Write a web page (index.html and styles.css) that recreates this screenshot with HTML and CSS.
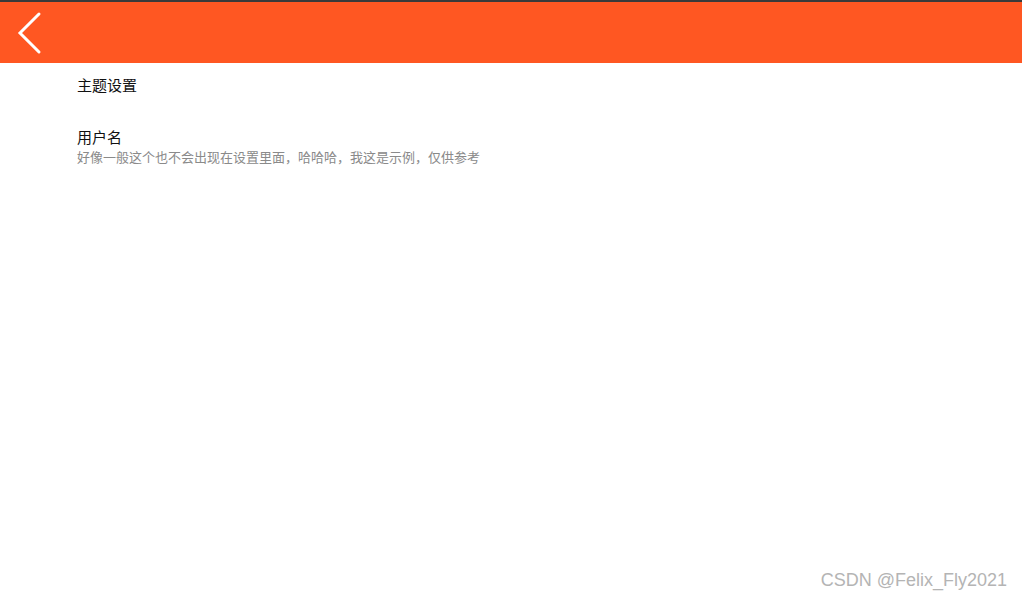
FILE: index.html
```html
<!DOCTYPE html>
<html>
<head>
<meta charset="utf-8">
<link rel="stylesheet" href="styles.css">
</head>
<body>
<div class="page">
  <div class="topline"></div>
  <header class="appbar">
    <svg class="back" width="30" height="44" viewBox="0 0 30 44">
      <polyline points="22,3 3,22 22,41" fill="none" stroke="#fff" stroke-width="3" stroke-linecap="round" stroke-linejoin="miter"/>
    </svg>
  </header>
  <main class="content">
    <div class="category">主题设置</div>
    <div class="pref">
      <div class="pref-title">用户名</div>
      <div class="pref-summary">好像一般这个也不会出现在设置里面，哈哈哈，我这是示例，仅供参考</div>
    </div>
  </main>
  <div class="watermark">CSDN @Felix_Fly2021</div>
</div>
</body>
</html>
```

FILE: styles.css
```css
html, body {
  margin: 0;
  padding: 0;
  background: #fff;
}
.page {
  position: relative;
  width: 1022px;
  height: 600px;
  overflow: hidden;
  font-family: "Noto Sans CJK SC", "Noto Sans", sans-serif;
}
.topline {
  height: 2px;
  background: #3a3a3a;
}
.appbar {
  height: 61px;
  background: #ff5722;
  display: flex;
  align-items: center;
  padding-left: 17px;
}
.back {
  display: block;
  margin-top: 1px;
}
.content {
  padding-left: 77px;
}
.category {
  margin-top: 12px;
  font-size: 15px;
  line-height: 20px;
  color: #111;
}
.pref {
  margin-top: 32px;
}
.pref-title {
  font-size: 15px;
  line-height: 20px;
  color: #111;
}
.pref-summary {
  margin-top: 1px;
  font-size: 13px;
  line-height: 17px;
  color: #8a8a8a;
}
.watermark {
  position: absolute;
  right: 15px;
  bottom: 9px;
  font-family: "Liberation Sans", Arial, sans-serif;
  font-size: 18px;
  color: #b4b4b4;
}
```
